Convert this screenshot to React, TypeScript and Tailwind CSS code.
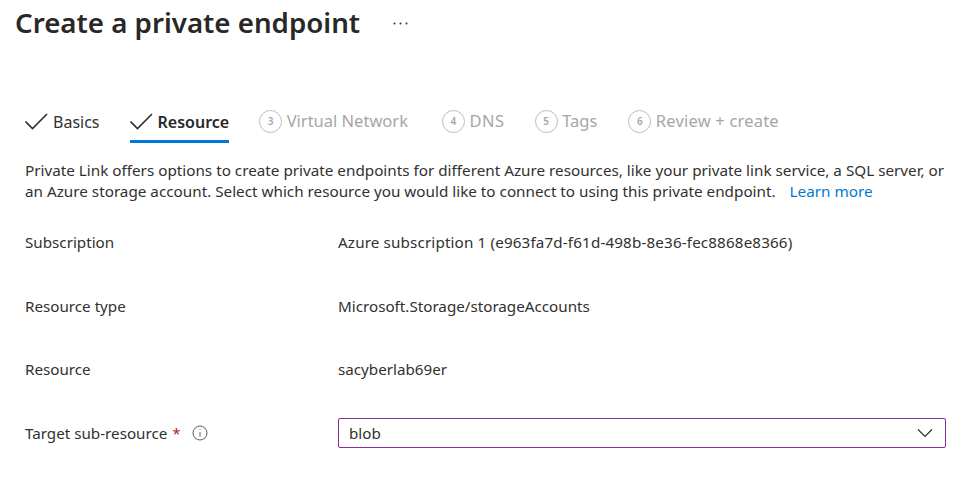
const font = "font-['Noto_Sans',sans-serif]"

function Check() {
  return (
    <svg width="23" height="17" viewBox="0 0 23 17" fill="none" className="mt-[6px] shrink-0">
      <path d="M0.5 8.5 L7.5 15.5 L22 1" stroke="#323130" strokeWidth="1.6" />
    </svg>
  )
}

function Step({ n, label, className }: { n: number; label: string; className: string }) {
  return (
    <div className={`flex items-center gap-[4.5px] text-[16.5px] text-[#a6a6a6] ${className}`}>
      <span className="flex h-[23px] w-[23px] items-center justify-center rounded-full border-[1.5px] border-[#bdbdbd] text-[10px] font-semibold tracking-normal">
        {n}
      </span>
      <span>{label}</span>
    </div>
  )
}

function Row({ label, value, valueClass }: { label: string; value: string; valueClass?: string }) {
  return (
    <div className="flex h-[63.5px] items-center text-[15.2px] text-[#323130]">
      <div className="w-[313px]">{label}</div>
      <div className={valueClass}>{value}</div>
    </div>
  )
}

export default function App() {
  return (
    <main className={`h-[492px] w-[980px] overflow-hidden bg-white ${font}`}>
      <div className="flex h-[45px] items-center pl-[15px]">
        <h1 className="text-[27.7px] font-semibold text-[#292827]">Create a private endpoint</h1>
        <svg width="15" height="3" viewBox="0 0 15 3" className="ml-[33px] mt-[1px]" fill="#323130">
          <circle cx="1.5" cy="1.5" r="1" />
          <circle cx="7.5" cy="1.5" r="1" />
          <circle cx="13.5" cy="1.5" r="1" />
        </svg>
      </div>

      <div className="mt-[60px] flex h-[38px] items-start pl-[25px] text-[16px]">
        <div className="flex h-[38px] items-start gap-[5px] pt-[2px] text-[#323130]">
          <Check />
          <span className="leading-[30px]">Basics</span>
        </div>
        <div className="ml-[30px] flex h-[38px] items-start gap-[5px] border-b-[3px] border-[#0078d4] pt-[2px] font-semibold text-[#292827]">
          <Check />
          <span className="leading-[30px]">Resource</span>
        </div>
        <Step n={3} label="Virtual Network" className="ml-[30px] h-[32px]" />
        <Step n={4} label="DNS" className="ml-[34px] h-[32px] tracking-[0.5px]" />
        <Step n={5} label="Tags" className="ml-[30px] h-[32px]" />
        <Step n={6} label="Review + create" className="ml-[31px] h-[32px] tracking-[0.2px]" />
      </div>

      <p className="mt-[17px] w-[945px] pl-[25px] text-[15.25px] leading-[21px] text-[#323130]">
        Private Link offers options to create private endpoints for different Azure resources, like your private link service, a SQL server, or an Azure storage account. Select which resource you would like to connect to using this private endpoint.
        <a className="ml-[14px] text-[#0078d4]">Learn more</a>
      </p>

      <div className="mt-[9px] pl-[25px]">
        <Row
          label="Subscription"
          value="Azure subscription 1 (e963fa7d-f61d-498b-8e36-fec8868e8366)"
          valueClass="tracking-[0.15px]"
        />
        <Row label="Resource type" value="Microsoft.Storage/storageAccounts" />
        <Row label="Resource" value="sacyberlab69er" />
        <div className="flex h-[63.5px] items-center text-[15.2px] text-[#323130]">
          <div className="flex w-[313px] items-center">
            <span>Target sub-resource</span>
            <span className="ml-[5px] text-[#a4262c]">*</span>
            <svg width="16" height="16" viewBox="0 0 16 16" fill="none" className="ml-[11px]">
              <circle cx="8" cy="8" r="7" stroke="#605e5c" />
              <path d="M8 7v4.5M8 4.5v1" stroke="#605e5c" />
            </svg>
          </div>
          <div className="flex h-[30px] w-[608px] items-center justify-between rounded-[2px] border border-[#8a2da5] pl-[10px] pr-[12px]">
            <span>blob</span>
            <svg width="16" height="10" viewBox="0 0 16 10" fill="none">
              <path d="M1 1.5 L8 8.5 L15 1.5" stroke="#323130" strokeWidth="1.2" />
            </svg>
          </div>
        </div>
      </div>
    </main>
  )
}
